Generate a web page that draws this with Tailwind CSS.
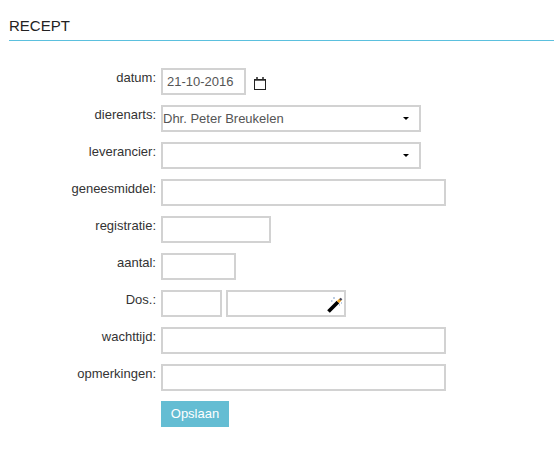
<!DOCTYPE html>
<html lang="en">
<head>
    <meta charset="UTF-8">
    <title>Recept</title>
    <script src="https://cdn.jsdelivr.net/npm/@tailwindcss/browser@4"></script>
</head>
<body class="bg-white h-[470px] overflow-hidden font-['Liberation_Sans',Arial,sans-serif] text-[13px] text-[#333]">
    <!-- Header -->
    <h1 class="ml-[9px] pt-[17px] pb-[5px] h-[41px] border-b border-[#5bc0de] text-[15px] leading-[18px] text-[#222]">RECEPT</h1>

    <!-- Form -->
    <form class="mt-[27px] flex flex-col gap-[10px]">
        <div class="flex">
            <label class="w-[156px] text-right pt-[2px] leading-[16px]">datum:</label>
            <input type="text" value="21-10-2016" class="ml-[5px] w-[85px] h-[27px] border-2 border-[#d2d2d2] px-[4px] text-[#555] outline-none">
            <svg class="ml-[7px] mt-[8px] w-[14px] h-[14px]" viewBox="0 0 14 14" fill="none">
                <rect x="1.5" y="3.5" width="11" height="10" fill="white" stroke="#222" stroke-width="1"></rect>
                <path d="M1.5 4h11" stroke="#222" stroke-width="1.4"></path>
                <path d="M4 1v2.5M10 1v2.5" stroke="#333" stroke-width="1.6"></path>
            </svg>
        </div>
        <div class="flex">
            <label class="w-[156px] text-right pt-[2px] leading-[16px]">dierenarts:</label>
            <div class="relative ml-[5px] w-[260px] h-[27px] border-2 border-[#d2d2d2] leading-[23px] text-[#555]">
                Dhr. Peter Breukelen
                <span class="absolute right-[10px] top-[10px] w-0 h-0 border-x-[3px] border-x-transparent border-t-[3px] border-t-black"></span>
            </div>
        </div>
        <div class="flex">
            <label class="w-[156px] text-right pt-[2px] leading-[16px]">leverancier:</label>
            <div class="relative ml-[5px] w-[260px] h-[27px] border-2 border-[#d2d2d2]">
                <span class="absolute right-[10px] top-[10px] w-0 h-0 border-x-[3px] border-x-transparent border-t-[3px] border-t-black"></span>
            </div>
        </div>
        <div class="flex">
            <label class="w-[156px] text-right pt-[2px] leading-[16px]">geneesmiddel:</label>
            <input type="text" class="ml-[5px] w-[285px] h-[27px] border-2 border-[#d2d2d2] outline-none">
        </div>
        <div class="flex">
            <label class="w-[156px] text-right pt-[2px] leading-[16px]">registratie:</label>
            <input type="text" class="ml-[5px] w-[110px] h-[27px] border-2 border-[#d2d2d2] outline-none">
        </div>
        <div class="flex">
            <label class="w-[156px] text-right pt-[2px] leading-[16px]">aantal:</label>
            <input type="text" class="ml-[5px] w-[75px] h-[27px] border-2 border-[#d2d2d2] outline-none">
        </div>
        <div class="flex">
            <label class="w-[156px] text-right pt-[2px] leading-[16px]">Dos.:</label>
            <input type="text" class="ml-[5px] w-[61px] h-[27px] border-2 border-[#d2d2d2] outline-none">
            <div class="relative ml-[4px] w-[120px] h-[27px] border-2 border-[#d2d2d2]">
                <svg class="absolute right-0 top-[4px] w-[18px] h-[18px]" viewBox="0 0 18 18" fill="none">
                    <path d="M2.5 15.5L12 6" stroke="#000" stroke-width="3.8"></path>
                    <path d="M12 6l2.5-2.5" stroke="#f5a623" stroke-width="3"></path>
                    <path d="M14 4l1.5-1.5" stroke="#445" stroke-width="2.4"></path>
                    <path d="M7 2h2M5 5h1.5M13 9h1M15 7h1" stroke="#7a9cc6" stroke-width="1"></path>
                </svg>
            </div>
        </div>
        <div class="flex">
            <label class="w-[156px] text-right pt-[2px] leading-[16px]">wachttijd:</label>
            <input type="text" class="ml-[5px] w-[285px] h-[27px] border-2 border-[#d2d2d2] outline-none">
        </div>
        <div class="flex">
            <label class="w-[156px] text-right pt-[2px] leading-[16px]">opmerkingen:</label>
            <input type="text" class="ml-[5px] w-[285px] h-[27px] border-2 border-[#d2d2d2] outline-none">
        </div>
        <div class="flex">
            <button type="button" class="ml-[161px] w-[68px] h-[26px] bg-[#64bdd3] text-white text-[13px]">Opslaan</button>
        </div>
    </form>
</body>
</html>
